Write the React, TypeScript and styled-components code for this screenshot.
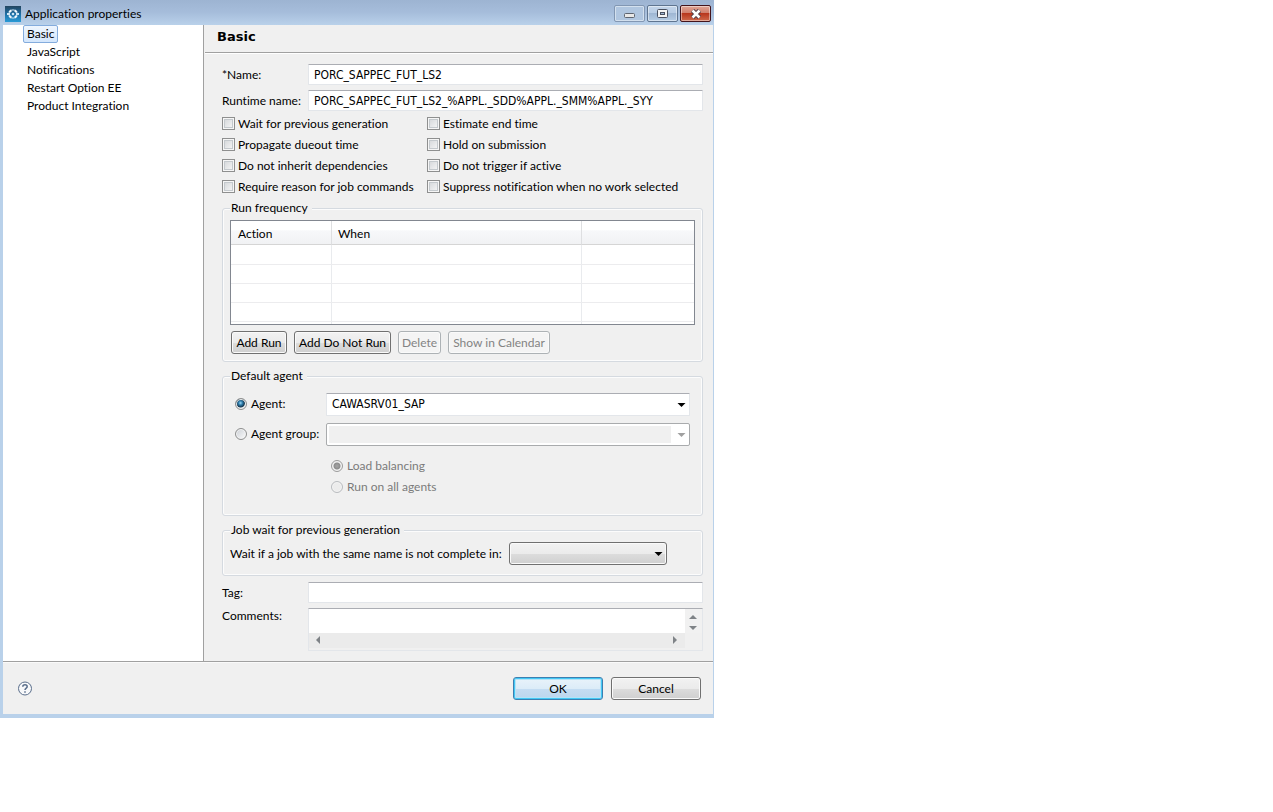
import React from 'react';
import styled, { createGlobalStyle, css } from 'styled-components';

const Global = createGlobalStyle`
  *, *::before, *::after { box-sizing: border-box; }
  body { margin: 0; background: #fff; font-variant-ligatures: none; }
  body, button, input, select, textarea {
    font-family: Lato, "Segoe UI", sans-serif;
    font-size: 12px;
    line-height: 16px;
    color: #000;
  }
  input, select, textarea {
    font-family: "DejaVu Sans Condensed", "Segoe UI", sans-serif;
  }
`;

const Dialog = styled.section`
  width: 100%;
  max-width: 714px;
  border: solid #b9d1ea;
  border-width: 0 1px 4px 3px;
  background: #f0f0f0;
`;

const TitleBar = styled.header`
  display: flex;
  align-items: center;
  height: 25px;
  margin: 0 -1px 0 -3px;
  padding: 2px 3px 0 5px;
  background: linear-gradient(#9db4d2, #a6bddb 50%, #b9d1ea);
`;

const Title = styled.h1`
  flex: 1;
  margin: 0 0 0 4px;
  font-size: 12px;
  font-weight: 400;
`;

const WindowButtons = styled.div`
  display: flex;
  gap: 2px;
`;

const WindowButton = styled.button<{ $tone?: 'dim' | 'close' }>`
  display: flex;
  align-items: center;
  justify-content: center;
  width: 31px;
  height: 17px;
  padding: 0;
  border: 1px solid #5f7590;
  border-radius: 2px;
  background: linear-gradient(#c3d5ea, #b7cbe3 50%, #9fb7d3 50%, #b5cce4);
  box-shadow: inset 0 0 0 1px rgba(255, 255, 255, 0.45);
  ${p => p.$tone === 'dim' && css`
    border-color: #8297b3;
    background: #b0c6e0;
  `}
  ${p => p.$tone === 'close' && css`
    border-color: #43141c;
    background: linear-gradient(#e0a596, #cf7c69 50%, #b8371d 50%, #cf6a4c);
  `}
`;

const Body = styled.div`
  display: grid;
  grid-template-columns: 201px 1fr;
  border-bottom: 1px solid #a0a0a0;
`;

const Nav = styled.nav`
  background: #fff;
  border-right: 1px solid #a0a0a0;
  padding-left: 20px;
`;

const NavList = styled.ul`
  margin: 0;
  padding: 0;
  list-style: none;
`;

const NavItem = styled.li`
  height: 18px;
`;

const NavLink = styled.a<{ $active?: boolean }>`
  display: inline-block;
  height: 18px;
  padding: 0 3px;
  border: 1px solid transparent;
  border-radius: 2px;
  color: #000;
  text-decoration: none;
  ${p => p.$active && css`
    border-color: #84acdd;
    background: linear-gradient(#eff6fe, #d3e6fc);
  `}
`;

const PageTitle = styled.h2`
  height: 28px;
  margin: 0 0 0 1px;
  padding: 4px 12px 0;
  border-bottom: 1px solid #a0a0a0;
  box-shadow: 0 1px #fff;
  font-family: "DejaVu Sans", Verdana, sans-serif;
  font-size: 13px;
  font-weight: 700;
  line-height: 16px;
`;

const Form = styled.form`
  padding: 11px 10px 10px 18px;
`;

const Fields = styled.div`
  display: grid;
  grid-template-columns: 86px 1fr;
  row-gap: 5px;
`;

const FieldLabel = styled.label`
  line-height: 21px;
  white-space: nowrap;
`;

const CommentsLabel = styled(FieldLabel)`
  line-height: 16px;
`;

const TextInput = styled.input`
  width: 100%;
  height: 21px;
  padding: 0 5px;
  border: 1px solid #e3e6ea;
  border-top-color: #abadb3;
  border-radius: 1px;
  background: #fff;
`;

const Checks = styled.div`
  display: grid;
  grid-template-columns: 205px 1fr;
  margin-top: 2px;
`;

const Choice = styled.label<{ $disabled?: boolean }>`
  display: flex;
  align-items: center;
  gap: 3px;
  height: 21px;
  white-space: nowrap;
  color: ${p => (p.$disabled ? '#7b7b7b' : '#000')};
`;

const CheckBox = styled.input.attrs({ type: 'checkbox' })`
  appearance: none;
  flex: none;
  width: 13px;
  height: 13px;
  margin: 0;
  border: 1px solid #8e8f8f;
  background: linear-gradient(135deg, #d0d3d6, #fafafa) padding-box;
  box-shadow: inset 0 0 0 1px #f6f6f6, inset 0 0 0 2px #c4c9cd;
`;

const Radio = styled.input.attrs({ type: 'radio' })`
  appearance: none;
  flex: none;
  width: 12px;
  height: 12px;
  margin: 0 1px 0 0;
  border: 1px solid #8e8f8f;
  border-radius: 50%;
  background: linear-gradient(135deg, #cbcfd5, #fcfcfc);
  box-shadow: inset 0 0 0 1px #f4f4f4;
  &:checked {
    background: radial-gradient(circle at 45% 40%, #9fd8f5 0, #2c7cab 2px, #17384f 4px, #dfe3e6 5px);
  }
  &:disabled { border-color: #b9bcbf; background: #ececec; }
  &:checked:disabled {
    border-color: #9c9c9c;
    background: radial-gradient(circle, #a5a5a5 0, #8d8d8d 3px, #ececec 4px);
  }
`;

const Group = styled.fieldset<{ $top: number; $bottom: number }>`
  min-width: 0;
  margin: 6px 0 0;
  padding: ${p => p.$top}px 7px ${p => p.$bottom}px;
  border: 1px solid #d5dae0;
  border-radius: 3px;
  box-shadow: inset 0 0 0 1px #fcfcfc;
`;

const FrequencyGroup = styled(Group)`
  margin-top: 3px;
`;

const Legend = styled.legend`
  padding: 0 4px 0 1px;
  background: #f0f0f0;
`;

const TableFrame = styled.div`
  height: 105px;
  overflow: hidden;
  border: 1px solid #828790;
  background: #fff;
`;

const Table = styled.table`
  width: 100%;
  border-collapse: separate;
  border-spacing: 0;
  table-layout: fixed;
`;

const Th = styled.th`
  height: 24px;
  padding: 3px 6px 0 7px;
  border-right: 1px solid #dedfe1;
  border-bottom: 1px solid #d5d5d5;
  background: linear-gradient(#fff 40%, #f7f8fa 42%, #f1f2f4);
  font-weight: 400;
  text-align: left;
  &:not(:first-child) { padding-left: 6px; }
  &:last-child { border-right: 0; }
`;

const Td = styled.td`
  height: 19px;
  padding: 0;
  border-right: 1px solid #e9ebee;
  border-bottom: 1px solid #ececee;
  &:last-child { border-right: 0; }
  tr:first-child > & { height: 20px; }
`;

const Buttons = styled.div`
  display: flex;
  gap: 7px;
  margin: 6px 0 0 1px;
`;

const Button = styled.button<{ $primary?: boolean; $width?: number }>`
  height: 23px;
  padding: 0;
  width: ${p => p.$width ?? 90}px;
  border: 1px solid #707070;
  border-radius: 3px;
  background: linear-gradient(#f2f2f2, #ebebeb 50%, #dddddd 50%, #cfcfcf);
  box-shadow: inset 0 0 0 1px #fafafa;
  white-space: nowrap;
  &:disabled {
    border-color: #adb2b5;
    background: #f4f4f4;
    color: #838383;
  }
  ${p => p.$primary && css`
    border-color: #3c7fb1;
    background: linear-gradient(#e9f3fa, #dcecf8 50%, #c5ddf2 50%, #bcd6ee);
    box-shadow: inset 0 0 0 1px #43c8f5, inset 0 0 0 2px #b5e3f7;
  `}
`;

const AgentGrid = styled.div`
  display: grid;
  grid-template-columns: 91px 1fr;
  row-gap: 7px;
  align-items: start;
  padding: 0 5px;
`;

const AgentModes = styled.div`
  margin: 9px 0 0 101px;
`;

const Combo = styled.div`
  position: relative;
  svg {
    position: absolute;
    right: 4px;
    top: 10px;
    pointer-events: none;
  }
`;

const Select = styled.select<{ $button?: boolean }>`
  appearance: none;
  display: block;
  width: 100%;
  height: 23px;
  padding: 0 20px 2px 5px;
  border: 1px solid #e3e6ea;
  border-top-color: #abadb3;
  border-radius: 1px;
  background: #fff;
  opacity: 1;
  &:disabled {
    padding: 2px 18px 2px 2px;
    border-color: #a9abad;
    border-radius: 2px;
    background: linear-gradient(#f0f0f0, #f0f0f0) content-box, #fff;
  }
  ${p => p.$button && css`
    border: 1px solid #707070;
    border-radius: 3px;
    background: linear-gradient(#f2f2f2, #ebebeb 50%, #dddddd 50%, #cfcfcf);
    box-shadow: inset 0 0 0 1px #fafafa;
  `}
`;

const WaitRow = styled.div`
  display: grid;
  grid-template-columns: 279px 158px;
  align-items: center;
  white-space: nowrap;
`;

const TailFields = styled(Fields)`
  margin-top: 6px;
`;

const CommentBox = styled.div`
  display: grid;
  grid-template-columns: 1fr 17px;
  grid-template-rows: 24px 15px;
  padding-bottom: 2px;
  border: 1px solid #e3e6ea;
  border-top-color: #abadb3;
`;

const CommentArea = styled.textarea`
  width: 100%;
  height: 24px;
  padding: 2px 5px;
  border: 0;
  resize: none;
  overflow: hidden;
  background: #fff;
`;

const ScrollTrack = styled.div<{ $vertical?: boolean }>`
  display: flex;
  flex-direction: ${p => (p.$vertical ? 'column' : 'row')};
  align-items: center;
  justify-content: space-between;
  padding: ${p => (p.$vertical ? '5px 1px 3px 0' : '0 8px 1px 6px')};
  background: ${p => (p.$vertical ? '#f1f1f1' : '#ebebeb')};
`;

const Footer = styled.footer`
  display: flex;
  align-items: center;
  gap: 8px;
  height: 52px;
  padding: 0 12px 0 14px;
  border-top: 1px solid #fafafa;
`;

const HelpButton = styled.button`
  display: flex;
  margin-right: auto;
  padding: 0;
  border: 0;
  background: none;
`;

const Arrow = ({ color = '#000' }: { color?: string }) => (
  <svg width="9" height="4" viewBox="0 0 9 4" aria-hidden="true">
    <path d="M0.5 0h8L4.5 4z" fill={color} />
  </svg>
);

const scrollShapes = {
  up: 'M0 5L4 1L8 5z',
  down: 'M0 1L4 5L8 1z',
  left: 'M5 0L1 4L5 8z',
  right: 'M1 0L5 4L1 8z',
};

const ScrollArrow = ({ dir }: { dir: keyof typeof scrollShapes }) => {
  const tall = dir === 'left' || dir === 'right';
  return (
    <svg width={tall ? 5 : 8} height={tall ? 8 : 5} aria-hidden="true">
      <path d={scrollShapes[dir]} fill="#7f8387" />
    </svg>
  );
};

const AppIcon = () => (
  <svg width="16" height="16" viewBox="0 0 16 16" aria-hidden="true">
    <defs>
      <linearGradient id="appFill" x1="0" y1="0" x2="0" y2="1">
        <stop offset="0" stopColor="#24455f" />
        <stop offset="0.5" stopColor="#1d6ea5" />
        <stop offset="1" stopColor="#2a9bd6" />
      </linearGradient>
    </defs>
    <rect width="16" height="16" fill="url(#appFill)" />
    <path d="M6.6 4.2A4 4 0 0 0 4.2 6.6M9.4 4.2A4 4 0 0 1 11.8 6.6M6.6 11.8A4 4 0 0 1 4.2 9.4M9.4 11.8A4 4 0 0 0 11.8 9.4" fill="none" stroke="#f0f7fc" strokeWidth="2" />
    <path d="M2 8h3M11 8h3" stroke="#cfe6f5" strokeWidth="2" />
    <path d="M8 3v2M8 11v2" stroke="#cfe6f5" strokeWidth="1" />
    <circle cx="8" cy="8" r="1.3" fill="#cfe6f5" />
  </svg>
);

const navItems = ['Basic', 'JavaScript', 'Notifications', 'Restart Option EE', 'Product Integration'];

const options = [
  'Wait for previous generation',
  'Estimate end time',
  'Propagate dueout time',
  'Hold on submission',
  'Do not inherit dependencies',
  'Do not trigger if active',
  'Require reason for job commands',
  'Suppress notification when no work selected',
];

export default function App() {
  return (
    <>
      <Global />
      <Dialog role="dialog" aria-labelledby="dialog-title">
        <TitleBar>
          <AppIcon />
          <Title id="dialog-title">Application properties</Title>
          <WindowButtons>
            <WindowButton type="button" aria-label="Minimize" $tone="dim">
              <svg width="11" height="9"><rect x="0.5" y="4.5" width="10" height="4" rx="1" fill="#e8e8e8" stroke="#5d6470" /></svg>
            </WindowButton>
            <WindowButton type="button" aria-label="Maximize">
              <svg width="11" height="9">
                <rect x="0.5" y="0.5" width="10" height="8" rx="1" fill="#f4f4f4" stroke="#4a5160" />
                <rect x="3.5" y="3.5" width="4" height="2" fill="#9fb7d3" stroke="#4a5160" />
              </svg>
            </WindowButton>
            <WindowButton type="button" aria-label="Close" $tone="close">
              <svg width="12" height="10" viewBox="0 0 12 10">
                <path d="M2.5 1.5L9.5 8.5M9.5 1.5L2.5 8.5" stroke="#4b3b46" strokeWidth="4.5" />
                <path d="M2.5 1.5L9.5 8.5M9.5 1.5L2.5 8.5" stroke="#fff" strokeWidth="2.6" />
              </svg>
            </WindowButton>
          </WindowButtons>
        </TitleBar>

        <Body>
          <Nav aria-label="Property pages">
            <NavList>
              {navItems.map((item, i) => (
                <NavItem key={item}>
                  <NavLink href="#" $active={i === 0}>{item}</NavLink>
                </NavItem>
              ))}
            </NavList>
          </Nav>

          <main>
            <PageTitle>Basic</PageTitle>
            <Form id="properties" onSubmit={e => e.preventDefault()}>
              <Fields>
                <FieldLabel htmlFor="name">*Name:</FieldLabel>
                <TextInput id="name" defaultValue="PORC_SAPPEC_FUT_LS2" />
                <FieldLabel htmlFor="runtime">Runtime name:</FieldLabel>
                <TextInput id="runtime" defaultValue="PORC_SAPPEC_FUT_LS2_%APPL._SDD%APPL._SMM%APPL._SYY" />
              </Fields>

              <Checks>
                {options.map(option => (
                  <Choice key={option}>
                    <CheckBox />
                    {option}
                  </Choice>
                ))}
              </Checks>

              <FrequencyGroup $top={4} $bottom={7}>
                <Legend>Run frequency</Legend>
                <TableFrame>
                  <Table>
                    <colgroup>
                      <col width="101" />
                      <col width="250" />
                      <col />
                    </colgroup>
                    <thead>
                      <tr><Th>Action</Th><Th>When</Th><Th aria-label="Details" /></tr>
                    </thead>
                    <tbody>
                      {[0, 1, 2, 3, 4].map(row => (
                        <tr key={row}><Td /><Td /><Td /></tr>
                      ))}
                    </tbody>
                  </Table>
                </TableFrame>
                <Buttons>
                  <Button type="button" $width={56}>Add Run</Button>
                  <Button type="button" $width={97}>Add Do Not Run</Button>
                  <Button type="button" $width={43} disabled>Delete</Button>
                  <Button type="button" $width={102} disabled>Show in Calendar</Button>
                </Buttons>
              </FrequencyGroup>

              <Group $top={9} $bottom={18}>
                <Legend>Default agent</Legend>
                <AgentGrid>
                  <Choice><Radio name="agent" defaultChecked />Agent:</Choice>
                  <Combo>
                    <Select aria-label="Agent"><option>CAWASRV01_SAP</option></Select>
                    <Arrow />
                  </Combo>
                  <Choice><Radio name="agent" />Agent group:</Choice>
                  <Combo>
                    <Select aria-label="Agent group" disabled />
                    <Arrow color="#a0a0a0" />
                  </Combo>
                </AgentGrid>
                <AgentModes>
                  <Choice $disabled><Radio name="mode" defaultChecked disabled />Load balancing</Choice>
                  <Choice $disabled><Radio name="mode" disabled />Run on all agents</Choice>
                </AgentModes>
              </Group>

              <Group $top={4} $bottom={10}>
                <Legend>Job wait for previous generation</Legend>
                <WaitRow>
                  <label htmlFor="wait">Wait if a job with the same name is not complete in:</label>
                  <Combo>
                    <Select id="wait" $button />
                    <Arrow />
                  </Combo>
                </WaitRow>
              </Group>

              <TailFields>
                <FieldLabel htmlFor="tag">Tag:</FieldLabel>
                <TextInput id="tag" />
                <CommentsLabel htmlFor="comments">Comments:</CommentsLabel>
                <CommentBox>
                  <CommentArea id="comments" />
                  <ScrollTrack $vertical><ScrollArrow dir="up" /><ScrollArrow dir="down" /></ScrollTrack>
                  <ScrollTrack><ScrollArrow dir="left" /><ScrollArrow dir="right" /></ScrollTrack>
                </CommentBox>
              </TailFields>
            </Form>
          </main>
        </Body>

        <Footer>
          <HelpButton type="button" aria-label="Help">
            <svg width="16" height="16" viewBox="0 0 16 16" fill="none" stroke="#5b6f8c">
              <circle cx="8" cy="7.5" r="6.5" fill="#f7f8fa" />
              <path d="M5.8 5.8C5.8 3.1 10.2 3.2 10.2 5.7C10.2 7.1 8 7.2 8 9.1M8 10.3v1.5" strokeWidth="1.5" />
            </svg>
          </HelpButton>
          <Button type="submit" form="properties" $primary>OK</Button>
          <Button type="button">Cancel</Button>
        </Footer>
      </Dialog>
    </>
  );
}
